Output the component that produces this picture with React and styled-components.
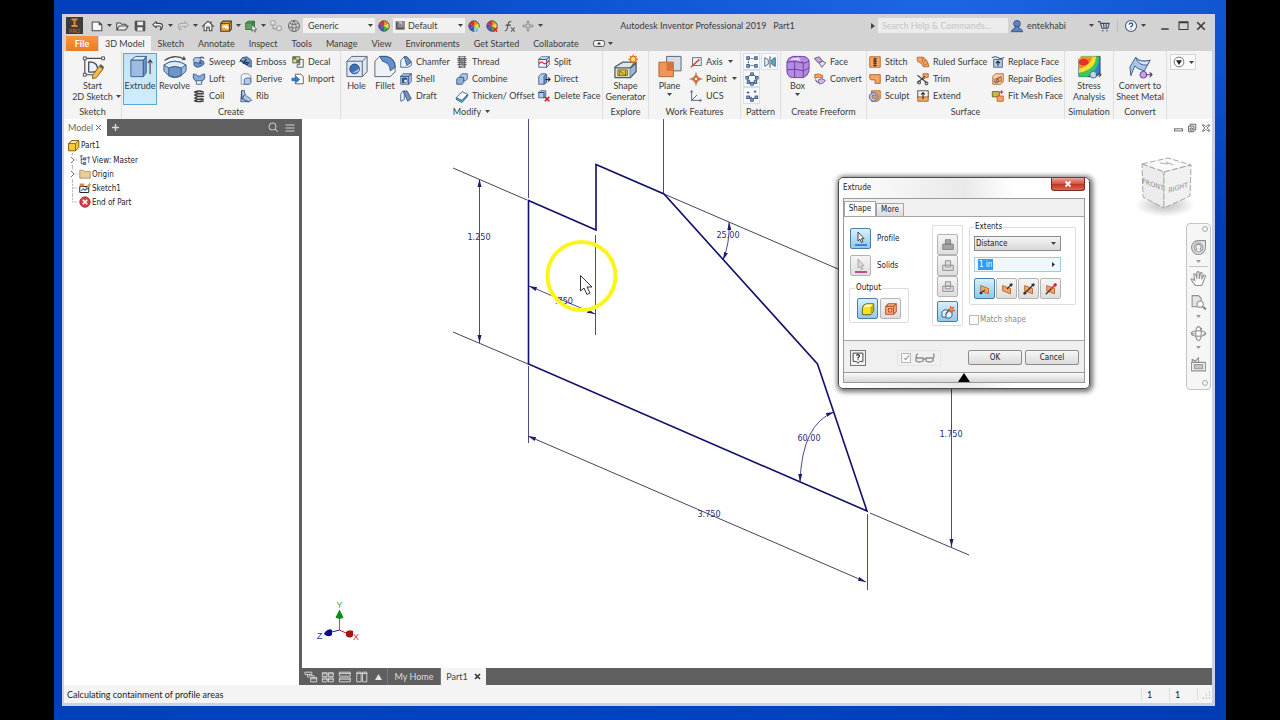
import React from 'react';
import styled, { createGlobalStyle, css } from 'styled-components';

const uiFont = '"Lato", "Open Sans", "Noto Sans", sans-serif';
const dialogFont = '"DejaVu Sans Condensed", "DejaVu Sans", sans-serif';

const GlobalStyle = createGlobalStyle`
  *, *::before, *::after { box-sizing: border-box; }
  body {
    margin: 0;
    background: #000;
    color: #3c3c3c;
    font-family: ${uiFont};
    font-size: 9px;
    line-height: 11px;
    font-variant-ligatures: none;
  }
  button, input, select { font: inherit; color: inherit; margin: 0; padding: 0; border: 0; background: none; }
  button { cursor: pointer; }
  a { color: inherit; text-decoration: none; }
  svg { display: block; flex: none; }
`;

/* ---------- icon artwork ---------- */

const blue = { fill: '#b4cbe8', stroke: '#3f5f8c', strokeWidth: 1, strokeLinejoin: 'round' };
const deep = { fill: '#6d95c8', stroke: '#34527e', strokeWidth: 1, strokeLinejoin: 'round' };
const pale = { fill: '#eef4fb', stroke: '#3f5f8c', strokeWidth: 1, strokeLinejoin: 'round' };
const orange = { fill: '#f3a566', stroke: '#b5632c', strokeWidth: 1, strokeLinejoin: 'round' };
const line = { fill: 'none', stroke: '#4a4a4a', strokeWidth: 1.2, strokeLinecap: 'round', strokeLinejoin: 'round' };
const thin = { fill: 'none', stroke: '#8f8f8f', strokeWidth: 1, strokeLinecap: 'round', strokeLinejoin: 'round' };

const Wheel = () => (
  <>
    <path d="M8 8L8 2A6 6 0 0 1 13.2 5Z" fill="#f08a1c" />
    <path d="M8 8L13.2 5A6 6 0 0 1 13.2 11Z" fill="#f2dc2c" />
    <path d="M8 8L13.2 11A6 6 0 0 1 8 14Z" fill="#3fae49" />
    <path d="M8 8L8 14A6 6 0 0 1 2.8 11Z" fill="#2f66c4" />
    <path d="M8 8L2.8 11A6 6 0 0 1 2.8 5Z" fill="#7a3fa8" />
    <path d="M8 8L2.8 5A6 6 0 0 1 8 2Z" fill="#dc2f2f" />
    <circle cx="8" cy="8" r="6" fill="none" stroke="#4b4b4b" strokeWidth="1" />
  </>
);

const Plane = () => <path d="M3 4L12 7.500V13.500L3 10Z" {...orange} />;

const art = {
  page: <path d="M2.500 3.500H10.500L13.500 6.500V13.500H2.500ZM10.500 3.500V6.500H13.500" {...line} fill="#f7f7f7" />,
  open: <path d="M2 12.500V4.500H6L7.500 6H12.500V8M2 12.500L5 8H15L12 12.500Z" {...line} fill="#ececec" />,
  save: (
    <>
      <path d="M2.500 2.500H13.500V13.500H3.500L2.500 12.500Z" fill="#555" stroke="#444" />
      <path d="M5 3H11.500V7H5ZM5 9.500H11V13.500H5Z" fill="#eee" />
    </>
  ),
  undo: <path d="M6 3L2 6.500L6 10V8H9.500C11.500 8 12 10 10.500 12.500C14 10.500 14.500 5 9.500 5H6Z" {...line} fill="#f6f6f6" />,
  redo: <path d="M10 3L14 6.500L10 10V8H6.500C4.500 8 4 10 5.500 12.500C2 10.500 1.500 5 6.500 5H10Z" {...line} stroke="#a9a9a9" fill="#ddd" />,
  home: <path d="M1.500 8.500L8 2.500L14.500 8.500M3.500 7.500V13.500H6.500V9.500H9.500V13.500H12.500V7.500M11.500 5V3" {...line} fill="#f6f6f6" />,
  update: (
    <>
      <path d="M2 5L4.500 2.500H14V11.500L12 14H2Z" fill="#f2a73a" stroke="#3c3c3c" strokeWidth="1.300" />
      <path d="M2 5H12V14M12 5L14 2.500" fill="none" stroke="#3c3c3c" />
      <path d="M3.500 9.500Q5 6.500 8 8L9 6.500L11 10.500H7L7.500 9.500Q5.500 8.500 3.500 9.500Z" fill="#fff" stroke="#fff" strokeWidth=".6" />
    </>
  ),
  pick: (
    <>
      <path d="M2 4.500L5 2.500H12L10 4.500V12H2ZM2 4.500H10L12 2.500V9" fill="#5aa95c" stroke="#2e6b33" />
      <path d="M9 6.500V14L11 12.300L12.300 15L13.500 14.300L12.300 11.800H14.500Z" fill="#fff" stroke="#444" strokeWidth=".8" />
    </>
  ),
  link: (
    <g {...line} stroke="#a0a0a0" fill="#e4e4e4">
      <rect x="2" y="2" width="5" height="5" rx="1" />
      <circle cx="11.500" cy="10.500" r="2.800" />
      <path d="M4.500 7V11H8.500" fill="none" />
    </g>
  ),
  sphere: (
    <g fill="none" stroke="#6b6b6b">
      <circle cx="8" cy="8" r="6.300" fill="#cfcfcf" stroke="#5a5a5a" />
      <path d="M3 5Q8 8 13 5M2 9Q8 12 14 9M8 2Q4 8 7 14M8 2Q12 8 10 14" />
    </g>
  ),
  wheel: <Wheel />,
  wheelPlus: (
    <>
      <Wheel />
      <path d="M8.500 10H14L12.500 12.500H14.500L11 15.500L8 12.500H10Z" fill="#72b6dc" stroke="#fff" strokeWidth=".6" />
    </>
  ),
  wheelDel: (
    <>
      <Wheel />
      <path d="M9.500 10L14 14.500M14 10L9.500 14.500" stroke="#e02b2b" strokeWidth="2" />
    </>
  ),
  fx: <path d="M2.500 13.500C5 13.500 5 10 5.800 6.500C6.300 3.500 7 2.500 9 2.800M3.500 7H8.500M9.500 10L13 14M13 10L9.500 14" {...line} />,
  plus: <path d="M7 2.500H9V7H13.500V9H9V13.500H7V9H2.500V7H7Z" fill="#ddd" stroke="#777" strokeWidth=".9" />,
  swatch: (
    <>
      <rect x="1" y="2" width="13" height="12" fill="#5c5c5c" />
      <path d="M4 2H14V11H4Z" fill="#8e8e8e" />
      <path d="M4 2H10V7Z" fill="#c4c4c4" />
    </>
  ),
  user: (
    <>
      <circle cx="8" cy="5.500" r="3.800" fill="#5f83c4" stroke="#2e4a86" />
      <path d="M1.500 14.500Q2 11.500 6 10.500V8.500H10V10.500Q14 11.500 14.500 14.500Z" fill="#5f83c4" stroke="#2e4a86" />
    </>
  ),
  cart: <path d="M1.500 3H3.500L5.500 10.500H12.500L14 5H4.500M7.500 5.500L8 10M10.500 5.500V10M6 13.500H7M11 13.500H12" {...line} stroke="#3f4a72" />,
  help: (
    <>
      <circle cx="8" cy="8" r="6.300" fill="#fff" stroke="#4a5a80" strokeWidth="1.300" />
      <path d="M6 6.500Q6 4.500 8 4.500T10 6.500Q10 7.500 8 8.800V9.800M8 11.200V12" fill="none" stroke="#2b55b5" strokeWidth="1.600" />
    </>
  ),
  sweep: (
    <>
      <ellipse cx="6" cy="6" rx="4.500" ry="3.300" {...blue} />
      <path d="M2 9Q2 14 7 14L12 12Q15 10 13 7L9 6.500Q8 9.500 11 9.500Q6 11 5 8.500Z" {...deep} />
      <path d="M9 3Q12 1.500 13.500 4" {...line} stroke="#34527e" />
    </>
  ),
  loft: (
    <>
      <path d="M1.500 2.500H4Q8 7 12 2.500H14.500V7Q14 9 10.500 11H5.500Q2 9 1.500 7Z" {...deep} fill="#84a9da" />
      <path d="M5 10H11V14H5Z" {...pale} />
    </>
  ),
  coil: <path d="M3 3.500Q8 1 13 3.500M3 3.500Q8 6 13 5.500Q8 4 3 7Q8 9.500 13 8.500Q8 7 3 10.500Q8 13 13 11.500Q8 10.500 3 13.500Q8 15.500 13 13.500" {...line} stroke="#3c3c3c" strokeWidth="1.500" />,
  emboss: (
    <>
      <path d="M4 3L9 2L14 6V14L9 12Z" {...deep} />
      <path d="M1.500 7Q3 2 8 5L6 8L11 9L9 11L5 9.500Q3 6 1.500 7Z" fill="#5a86b8" stroke="#1f355c" strokeWidth="1.300" />
      <path d="M3 5.500Q5 3.500 7 5" stroke="#fff" fill="none" />
    </>
  ),
  derive: (
    <>
      <path d="M2.500 4L5 2H10L13.500 4.500V12L11 14H2.500Z" {...pale} stroke="#7f8fa8" />
      <path d="M6 8.500L8 7H13.500V12L12 14H6Z" {...blue} />
    </>
  ),
  rib: (
    <>
      <path d="M3 2L6 1.500Q6 8 12 10L14.500 13L11 14.500H2Z" {...blue} />
      <path d="M3 2V11L11 14.500M4 11Q5 8 6 7" {...line} stroke="#34527e" />
    </>
  ),
  decal: (
    <>
      <path d="M2 2H10V9H2Z" fill="#e5e36a" stroke="#4e4e4e" />
      <path d="M2 2H6V5H2ZM6 5H10V9H6Z" fill="#6f6f6f" />
      <path d="M10 5H14V14H7V11H10Z" {...pale} stroke="#555" />
    </>
  ),
  import: (
    <>
      <path d="M5 2.500H11L14 5V13.500H5Z" fill="#fff" stroke="#555" />
      <path d="M1 7H6V5L10 8.500L6 12V10H1Z" fill="#2f7fd0" stroke="#1c5c9e" strokeWidth=".7" />
    </>
  ),
  chamfer: (
    <>
      <path d="M2 6L6 2H9L14 8V12L10 14H2Z" {...pale} />
      <path d="M6 2H9L14 8L9 12Z" {...deep} />
    </>
  ),
  shell: (
    <>
      <path d="M2 5L5 2H14V11L11 14H2Z" {...blue} />
      <path d="M2 5H11V14M11 5L14 2" {...line} stroke="#3f5f8c" />
      <path d="M4 7H9V12H4Z" fill="#3d5f95" stroke="#203a63" />
      <path d="M6 9H9V12H6Z" fill="#dfeaf8" />
    </>
  ),
  draft: (
    <>
      <path d="M2 6Q3 2 6 2V12L2 14Z" {...pale} />
      <path d="M5 3L9 2L14 11L10 14Z" {...deep} />
    </>
  ),
  thread: <path d="M4 2H12M3 4H13L3 6H13L3 8.500H13L3 11H13L4 14H12M5 2V14M11 2V14" {...line} stroke="#5a5a5a" strokeWidth="1" />,
  combine: (
    <>
      <path d="M6 4L8 2H14V8L12 10H6Z" {...blue} />
      <path d="M2 8L4 6H10V12L8 14H2Z" {...deep} fill="#8fb1dc" />
    </>
  ),
  thicken: (
    <>
      <path d="M1.500 10L8 3L14.500 6L8 14Z" fill="#f4f8fd" stroke="#3f5f8c" />
      <path d="M1.500 10V12L8 15.500L14.500 8V6L8 13Z" fill="#62b4c8" stroke="#2e5f7c" />
    </>
  ),
  split: (
    <>
      <path d="M2 5L5 2H14V11L11 14H2Z" {...pale} />
      <path d="M2 5H11V14M11 5L14 2" {...line} stroke="#3f5f8c" />
      <path d="M2 10Q5 7 7 9T11 9L14 6" fill="none" stroke="#dd3333" strokeWidth="1.500" />
    </>
  ),
  direct: (
    <>
      <path d="M2 5L5 2H10V11L8 14H2Z" {...blue} />
      <path d="M8 5L10 3H11V12L8 14Z" {...deep} />
      <path d="M10 8.500H15M13 6.500L15 8.500L13 10.500" {...line} stroke="#222" />
    </>
  ),
  deleteFace: (
    <>
      <path d="M2 4L4 2H10V8L8 10H2Z" {...blue} />
      <path d="M2 4H8V10" {...line} stroke="#34527e" />
      <path d="M9 9L14 14M14 9L9 14" stroke="#d22525" strokeWidth="2" />
    </>
  ),
  axis: (
    <>
      <path d="M4 3H14V12H4Z" fill="#eef0f4" stroke="#52627c" />
      <path d="M2 14L12 5" stroke="#c5482c" strokeWidth="1.600" />
    </>
  ),
  point: (
    <>
      <path d="M8 3L13 8L8 13L3 8Z" {...orange} />
      <path d="M8 0.500V15.500M0.500 8H15.500" stroke="#a8572a" />
      <circle cx="8" cy="8" r="2" fill="#fff" stroke="#a8572a" />
    </>
  ),
  ucs: <path d="M3 2V13H14M3 13L9 7M2 3.500L3 2L4 3.500M12.500 12L14 13L12.500 14" {...line} stroke="#47566f" strokeWidth="1" />,
  patRect: (
    <g fill="#86a9da" stroke="#34527e">
      <path d="M4 4H12M4 4V12M4 12H12" strokeDasharray="2 1" fill="none" />
      <rect x="2" y="2" width="3" height="3" /><rect x="11" y="2" width="3" height="3" />
      <rect x="2" y="11" width="3" height="3" /><rect x="11" y="11" width="3" height="3" />
    </g>
  ),
  mirror: (
    <>
      <path d="M2 3L6 5.500V10.500L2 13Z" {...pale} />
      <path d="M14 3L10 5.500V10.500L14 13Z" fill="#5fb0d0" stroke="#2c5c7c" />
      <path d="M8 1.500V14.500" stroke="#333" />
    </>
  ),
  patCirc: (
    <g fill="#86a9da" stroke="#34527e">
      <circle cx="8" cy="8" r="5" fill="none" />
      <rect x="6.500" y="1" width="3" height="3" /><rect x="6.500" y="12" width="3" height="3" />
      <rect x="1" y="5" width="3" height="3" /><rect x="12" y="5" width="3" height="3" />
      <rect x="2.500" y="10" width="3" height="3" /><rect x="10.500" y="10" width="3" height="3" />
    </g>
  ),
  patSketch: (
    <g fill="#86a9da" stroke="#34527e">
      <path d="M2 4H5M3.500 2.500V5.500M10 3H13M11.500 1.500V4.500M4 9.500H8M8 12L13 9" fill="none" />
      <rect x="2" y="8" width="3" height="3" /><rect x="6.500" y="11" width="3" height="3" /><rect x="11.500" y="8" width="3" height="3" />
    </g>
  ),
  face: (
    <>
      <path d="M1.500 4L7 2L11 7L6 9Z" fill="#c9a2ea" stroke="#5b5566" />
      <path d="M7 9L11 7L14.500 9L10 14Z" fill="#e9dcf6" stroke="#5b5566" />
    </>
  ),
  convert: (
    <>
      <path d="M2 3Q7 1 11 4V7Q7 5 2 7Z" {...orange} />
      <path d="M6 9Q10 6 14 9.500Q12 14 7 13.500Z" fill="#d7b7ef" stroke="#7a4fa8" />
      <path d="M3 9Q4 12 6 12" {...line} />
    </>
  ),
  stitch: (
    <>
      <path d="M2 2H14V14H2Z" {...orange} />
      <path d="M8 3V13M6 4.500H10M6 7H10M6 9.500H10M6 12H10" stroke="#3c2f28" strokeWidth="1.200" />
    </>
  ),
  patch: <path d="M2 3H14V13H8V9H4Q2 9 2 7Z" {...orange} />,
  sculpt: (
    <>
      <path d="M4 2H14V11L11 14H4Z" {...orange} />
      <circle cx="6.500" cy="9" r="5" fill="#a9c4ea" stroke="#3f5f8c" />
      <path d="M5 7H9V11L5 10Z" {...orange} />
    </>
  ),
  ruled: <path d="M1.500 2.500H8Q14 6 14.500 13.500H8.500Q7 9 1.500 7ZM8 2.500L7 8M11.500 5.500L8 10M14 9.500L8.500 12" {...orange} />,
  trim: (
    <>
      <path d="M8 2H14V6Q10 6 8 9Z" {...orange} />
      <path d="M2 4L12 12M2 12L10 5" {...line} stroke="#444" />
      <circle cx="3.500" cy="12" r="1.600" {...line} /><circle cx="12" cy="13" r="1.600" {...line} />
    </>
  ),
  extend: (
    <>
      <path d="M2 9H14V14H2Z" {...orange} />
      <path d="M2 9V2H14V9" {...line} stroke="#555" strokeDasharray="2 1" />
      <path d="M8 11V4M6 6L8 4L10 6" {...line} stroke="#222" />
    </>
  ),
  replace: (
    <>
      <path d="M3 5H13V14H3Z" {...blue} />
      <path d="M1.500 3Q5 1 8 3T14.500 3" {...line} stroke="#34527e" />
      <path d="M8 12V7M6 9L8 7L10 9" {...line} stroke="#222" />
    </>
  ),
  repair: (
    <>
      <path d="M2 5L5 2H14V11L11 14H2Z" {...orange} fill="#f7d3b2" />
      <path d="M5 11L12 4M5 11L8 6H12V11Z" {...orange} />
      <circle cx="6" cy="10" r="2.500" fill="none" stroke="#5a5a5a" />
    </>
  ),
  fit: (
    <>
      <path d="M1.500 3H9.500V9H1.500Z" fill="#c8b64a" stroke="#6b5c1e" />
      <path d="M7 8H14V14H7Z" {...orange} />
      <path d="M12 1.500V5.500M10 3.500H14" stroke="#d33" strokeWidth="1.300" />
    </>
  ),
  badge: (
    <>
      <circle cx="8" cy="8" r="6.500" fill="#fff" stroke="#666" strokeWidth="1.200" />
      <path d="M4 5.500H12L8 12Z" fill="#222" />
    </>
  ),
  search: <path d="M10 10L14 14M11.500 6.500A5 5 0 1 1 1.500 6.500A5 5 0 1 1 11.500 6.500Z" fill="none" stroke="#c9c9c9" strokeWidth="1.500" />,
  menu: <path d="M2 4H14M2 8H14M2 12H14" stroke="#d2d2d2" strokeWidth="1.500" />,
  part: (
    <>
      <path d="M2 5.500L6 2H14.500V10.500L10.500 14.500H2Z" fill="#f6c93a" stroke="#7a5a10" strokeWidth="1.200" />
      <path d="M2 5.500L6 2H14.500L10.500 5.500Z" fill="#fdf3b8" stroke="#7a5a10" />
      <path d="M10.500 5.500V14.500" stroke="#7a5a10" />
    </>
  ),
  view: (
    <>
      <path d="M1 2.500H5M3 2.500V13M3 7H6M3 13H6" stroke="#333" fill="none" />
      <path d="M6 5H9V8H6ZM6 11H9V14H6ZM10 5H15M13 3V12" fill="#7ea5d6" stroke="#34527e" />
    </>
  ),
  folder: <path d="M1 13.500V3H6L7.500 4.500H15V13.500Z" fill="#e9cd98" stroke="#9c8258" />,
  sketch: (
    <>
      <path d="M1 6H13V14H1Z" fill="#f7f7f7" stroke="#222" strokeWidth="1.300" />
      <path d="M3 12L6 9L8 11L12 8" stroke="#2d62b8" strokeWidth="1.400" fill="none" />
      <path d="M1 2H7V6H1Z" fill="#e0873c" /><path d="M9 8L14 2L15.500 3.500L11 9Z" fill="#efc34a" stroke="#6b4a18" strokeWidth=".7" />
    </>
  ),
  end: (
    <>
      <circle cx="8" cy="8" r="7" fill="#d6404a" stroke="#8f2430" />
      <path d="M5 5L11 11M11 5L5 11" stroke="#fff" strokeWidth="2.200" />
    </>
  ),
  cascade: <path d="M1.500 2.500H9V5H1.500ZM4 5V8H6M6 6.500H11.500V8M8 8.500H14.500V13.500H8ZM8 10H14.500" {...thin} stroke="#ddd" />,
  tiles: <path d="M2 3H7V7.500H2ZM9 3H14V7.500H9ZM2 9H7V13.500H2ZM9 9H14V13.500H9ZM2 4.500H7M9 4.500H14M2 10.500H7M9 10.500H14" {...thin} stroke="#ddd" />,
  rows: <path d="M2 2.500H14V7H2ZM2 9H14V13.500H2ZM2 4H14M2 10.500H14" {...thin} stroke="#ddd" />,
  cols: <path d="M2.500 2.500H7V13.500H2.500ZM9 2.500H13.500V13.500H9ZM2.500 4H7M9 4H13.500" {...thin} stroke="#ddd" />,
  minimise: <path d="M3 12H13" stroke="#3a3a3a" strokeWidth="2" />,
  maximise: <path d="M2.500 3.500H13.500V13H2.500ZM2.500 4.500H13.500" fill="none" stroke="#3a3a3a" strokeWidth="1.300" />,
  close: <path d="M3 3L13 13M13 3L3 13" stroke="#3a3a3a" strokeWidth="2.200" />,
  mdiMin: <rect x="2" y="8.500" width="12" height="3" fill="#fff" stroke="#555" strokeWidth="1.200" />,
  mdiMax: <path d="M5 4.500V2H14V11H11.500M2.500 5H11V14H2.500ZM5 8H8.500V11.500H5Z" fill="none" stroke="#555" strokeWidth="1.400" />,
  mdiClose: <path d="M2 3H5L8 6L11 3H14L10 8L14 13H11L8 10L5 13H2L6 8Z" fill="#fff" stroke="#555" strokeWidth="1.300" />,
  boxJoin: <path d="M5 2H11V7H5ZM2 7H14V13H2Z" fill="#a4a4a4" stroke="#7c7c7c" />,
  boxCut: <path d="M5 7V2H11V7M2 7H14V13H2ZM5 7V9H11V7" fill="#dcdcdc" stroke="#8a8a8a" />,
  boxMeet: <path d="M5 2H11V7H5ZM2 7H14V13H2ZM5 7V10H11V7" fill="#dcdcdc" stroke="#8a8a8a" />,
  newSolid: (
    <>
      <path d="M2 8L4 6H8V11L6 13H2Z" {...pale} /><path d="M6 9L8 7H12V12L10 14H6Z" {...pale} />
      <path d="M5 11L10 6" stroke="#c5482c" />
      <path d="M10.500 2L11.500 4L14 3L12.500 5L15 7L12 6.500L11 9L10.500 6.500L8 5.500L10.500 5Z" fill="#f0a050" stroke="#c5482c" strokeWidth=".7" />
    </>
  ),
  cursor: (
    <>
      <path d="M5 1V10L7 8.200L8.500 11.500L10 10.800L8.500 7.700H11Z" fill="#fff" stroke="#444" />
      <path d="M2 14H14" stroke="#2a6fd0" strokeWidth="1.600" />
    </>
  ),
  cursorOff: (
    <>
      <path d="M5 1V10L7 8.200L8.500 11.500L10 10.800L8.500 7.700H11Z" fill="#ddd" stroke="#aaa" />
      <path d="M2 14H14" stroke="#b02a80" strokeWidth="1.600" />
    </>
  ),
  solid: (
    <>
      <path d="M1.500 8Q1.500 3 6 2H14.500V10.500L11 14.500H1.500Z" fill="#f7e21e" stroke="#5d5410" />
      <path d="M3 6Q4 3 7 2.800H13L11 5.500H6Q4 5.500 3 6Z" fill="#fffbd0" />
      <path d="M11 6L14 3V10.500L11 14Z" fill="#c9a90c" />
    </>
  ),
  surface: <path d="M2 5L5 2H14V11L11 14H2ZM2 5H11V14M11 5L14 2M5 7.500H9V11.500H5Z" fill="#f6b988" stroke="#b5532a" strokeWidth="1.200" />,
  dir1: <><Plane /><path d="M8 9L2 13.500M2 13.500L5 13M2 13.500L3.500 11" stroke="#333" strokeWidth="1.300" fill="none" /></>,
  dir2: <><Plane /><path d="M8 8L14 2M14 2L11 3M14 2L13 5" stroke="#333" strokeWidth="1.300" fill="none" /></>,
  dirMid: <><Plane /><path d="M2 14L14 2M14 2L11 3M14 2L13 5M2 14L5 13M2 14L3 11" stroke="#333" strokeWidth="1.500" fill="none" /></>,
  dirAsym: <><Plane /><path d="M8 8L14 2M14 2L11 3M14 2L13 5" stroke="#d22" strokeWidth="1.800" fill="none" /><path d="M8 8L2 14" stroke="#333" strokeWidth="1.500" /></>,
  helpBox: (
    <>
      <path d="M1.500 1.500H14.500V12.500H10L8 15L6 12.500H1.500Z" fill="#fff" stroke="#333" strokeWidth="1.200" />
      <path d="M6 5Q6 3.500 8 3.500T10 5Q10 6.500 8 7.500V8.500M8 9.800V11" fill="none" stroke="#222" strokeWidth="1.500" />
    </>
  ),
  navWheel: <><path d="M8 1.500H14.500V8A6.500 6.500 0 1 1 8 1.500Z" {...thin} fill="#e6e9ef" /><circle cx="8" cy="8" r="4.200" {...thin} fill="#f4f4f4" /><path d="M5 11L6.500 9.500A2.500 2.500 0 1 1 9.500 9.500L11 11" {...thin} /></>,
  hand: <path d="M5 14.500Q2 11 1 8.500Q2 7.500 4.500 10L3.500 4Q4.500 3 5.500 4.500L6.500 8L6.500 2Q7.500 1 8.500 2L8.800 8L10 2.500Q11 2 11.500 3L11 8.500L13 5Q14.500 4.500 14.500 6L12.500 11Q12 13.500 11 14.500Z" {...thin} fill="#fafafa" />,
  zoomPage: <><path d="M2 1.500H8L10.500 4V12H2Z" {...thin} fill="#e6e6e6" /><circle cx="9.500" cy="9.500" r="3" {...thin} fill="#fff" /><path d="M12 12L15 14.500" stroke="#888" strokeWidth="2" /></>,
  orbit: <g {...thin}><ellipse cx="8" cy="8" rx="6.500" ry="2.600" /><ellipse cx="8" cy="8" rx="2.600" ry="6.500" /><path d="M1 7L2 9L4 8M11 3L10 5M13 9L15 8" /></g>,
  lookAt: <><path d="M1.500 6H14.500V14H1.500ZM2 6V3L5 5L8 1.500V5" {...thin} fill="#fafafa" /><rect x="4" y="8" width="8" height="4" fill="#c4c4c4" stroke="#999" /></>,
};

const bigArt = {
  sketch: (
    <>
      <path d="M5 4H24M5 4V21M5 21H13" {...line} />
      <path d="M9 8H12Q19 9 18 17Q14 19 9 18Z" fill="#e9f0f8" stroke="#3a4a62" strokeWidth="1.300" />
      <path d="M3.500 2.500H6.500V5.500H3.500ZM3.500 19.500H6.500V22.500H3.500ZM22.500 2.500H25.500V5.500H22.500Z" fill="#fff" stroke="#4a4a4a" />
      <path d="M13 22L20 12L24 15L17 24L13 25Z" fill="#f1bd4c" stroke="#8a5a1c" />
      <path d="M20 12L21.500 10L25 13L24 15Z" fill="#5a5a5a" />
    </>
  ),
  extrude: (
    <>
      <path d="M4 6L9 2H20L17 6Z" fill="#dfeaf8" stroke="#3f5f8c" />
      <path d="M4 6H17V23H4Z" fill="#9dbce2" stroke="#3f5f8c" />
      <path d="M17 6L20 2V19L17 23Z" fill="#6d95c8" stroke="#3f5f8c" />
      <path d="M24 20V6M22 8.500L24 5.500L26 8.500" {...line} />
    </>
  ),
  revolve: (
    <>
      <path d="M3 6Q13 -1 24 5M24 5L21 5.500M24 5L22.500 2.500" {...line} />
      <path d="M2 11Q13 3 25 11V17L20 22Q13 26 7 22L2 17Z" fill="#9dbce2" stroke="#3f5f8c" />
      <path d="M2 11Q13 3 25 11L20 14Q13 11 7 14Z" fill="#dfeaf8" stroke="#3f5f8c" />
      <path d="M7 14Q13 11 20 14V22Q14 25 7 22Z" fill="#6d95c8" stroke="#3f5f8c" />
    </>
  ),
  hole: (
    <>
      <path d="M3 7L8 2H24V18L19 23H3Z" fill="#dfe7f0" stroke="#55657c" />
      <path d="M3 7H19V23M19 7L24 2" fill="none" stroke="#55657c" />
      <circle cx="11" cy="15" r="5" fill="#3f6fb4" stroke="#284a80" />
      <path d="M8 18A5 5 0 0 0 16 14Q11 19 8 18Z" fill="#b4d0f0" />
    </>
  ),
  fillet: (
    <>
      <path d="M3 7L8 2H15Q24 4 24 13V18L19 23H3Z" fill="#eef2f7" stroke="#55657c" />
      <path d="M8 2H15Q24 4 24 13L19 17Q19 9 11 7Z" fill="#5f92d2" stroke="#34527e" />
    </>
  ),
  shape: (
    <>
      <path d="M2 13L10 8H23L18 14V24H2Z" fill="#dfe9d8" stroke="#4d5c66" strokeWidth="1.300" />
      <path d="M2 14H18M18 14L24 9V18L18 24" fill="#9cb7cf" stroke="#4d5c66" strokeWidth="1.300" />
      <path d="M5 16H15V22H5Z" fill="#e6bf3e" stroke="#7c6a24" />
      <path d="M7 22V17L13 22V17" fill="none" stroke="#7c6a24" />
      <circle cx="21" cy="5" r="3" fill="#ffe27a" stroke="#e2711d" strokeWidth="1.300" />
      <path d="M21 0V2M21 8V10M16 5H18M24 5H26M17.500 1.500L19 3M23 7L24.500 8.500M24.500 1.500L23 3" stroke="#e2711d" strokeWidth="1.300" />
    </>
  ),
  plane: (
    <>
      <path d="M10 2H25V17H10Z" fill="#d8dde3" stroke="#5a6472" />
      <path d="M2 8H17V23H2Z" fill="#f0965a" stroke="#b5632c" />
      <path d="M10 8H17V17H10Z" fill="#d9743c" />
    </>
  ),
  box: (
    <>
      <path d="M2 8Q3 3 8 2H18Q24 2 25 7V17Q24 22 19 24H8Q3 24 2 18Z" fill="#b58ae2" stroke="#6c3fa0" />
      <path d="M2 8Q10 6 19 9Q24 8 25 7M19 9V24M10 8V24M2 16Q10 14 19 17L25 14M9 2Q14 3 19 9" fill="none" stroke="#6c3fa0" />
      <path d="M5 6Q8 3 14 3L17 7Q11 5 5 6Z" fill="#e6d4f7" />
    </>
  ),
  stress: (
    <>
      <path d="M3 5L6 2H25V19L21 23H3Z" fill="#2b7fd8" stroke="#3a4a6a" />
      <path d="M3 5L6 2H24Q24 16 12 23H3Z" fill="#3fc45a" />
      <path d="M3 5L6 2H21Q20 14 8 18L3 19Z" fill="#f4e22e" />
      <path d="M3 6L6 3H17Q15 12 3 15Z" fill="#f5872a" />
      <ellipse cx="8" cy="8" rx="5" ry="3.500" fill="#e2332a" />
      <circle cx="18" cy="21" r="3.500" fill="#b9dcec" stroke="#3f6f8c" />
      <path d="M21 21H26M24 19L26 21L24 23" {...line} />
    </>
  ),
  metal: (
    <>
      <path d="M3 13L9 3Q13 9 24 6L18 17Q10 15 8 12L4 22Z" fill="#a9c6e6" stroke="#3f5f8c" />
      <path d="M9 3Q13 9 24 6L21 11Q12 12 9 3Z" fill="#dfeaf8" stroke="#3f5f8c" />
      <circle cx="17" cy="21" r="3.500" fill="#c9a2ea" stroke="#5c3f8c" />
      <path d="M20 21H26M24 19L26 21L24 23" {...line} stroke="#4c2f7c" />
    </>
  ),
};

const Icon = ({ name, size = 14 }) => (
  <svg width={size} height={size} viewBox="0 0 16 16" aria-hidden="true">{art[name]}</svg>
);
const BigIcon = ({ name }) => (
  <svg width="26" height="26" viewBox="0 0 27 26" aria-hidden="true">{bigArt[name]}</svg>
);

const CaretShape = styled.svg`
  width: 5px;
  height: 3px;
  fill: ${p => (p.$soft ? '#999' : '#444')};
`;
const Caret = ({ soft }) => (
  <CaretShape $soft={soft} viewBox="0 0 5 3" aria-hidden="true"><path d="M0 0H5L2.500 3Z" /></CaretShape>
);

/* ---------- desktop and window frame ---------- */

const Desktop = styled.div`
  min-height: 100vh;
  margin: 0 54px;
  padding: 14px 11px 14px 8px;
  display: flex;
  background:
    radial-gradient(ellipse 60% 35% at 75% 0, #1d66e4 0, rgba(29, 102, 228, 0) 100%),
    linear-gradient(90deg, #0040ba, #0043c2 50%, #003cb4);
`;
const AppWindow = styled.div`
  flex: 1;
  min-width: 0;
  display: flex;
  flex-direction: column;
  border: solid #cbd3e2;
  border-width: 1px 3px 3px 2px;
  background: #f4f4f4;
`;

/* ---------- title bar ---------- */

const TitleBar = styled.header`
  height: 21px;
  display: flex;
  align-items: center;
  padding: 0 2px;
  background: #d3d3d3;
`;
const Logo = styled.div`
  width: 17px;
  height: 17px;
  margin-right: 5px;
  background: #3f3b38;
  text { font-family: "Liberation Sans", sans-serif; font-size: 5px; fill: #c9742a; text-anchor: middle; }
`;
const ToolButton = styled.button`
  width: ${p => (p.$narrow ? 7 : 18)}px;
  height: 18px;
  display: flex;
  align-items: center;
  justify-content: center;
`;
const Combo = styled.div`
  position: relative;
  width: 72px;
  height: 15px;
  display: flex;
  align-items: center;
  gap: 2px;
  padding-left: ${p => (p.$icon ? 2 : 5)}px;
  background: #f1f1f1;

  select { flex: 1; height: 15px; appearance: none; outline: 0; line-height: 15px; }
  > svg:last-child { position: absolute; right: 2px; top: 6px; pointer-events: none; }
`;
const AppTitle = styled.h1`
  flex: 1;
  margin: 0;
  font-size: 9px;
  font-weight: 400;
  text-align: center;
  white-space: pre;
`;
const SearchBox = styled.input`
  width: 130px;
  height: 15px;
  margin-left: 3px;
  padding: 0 4px;
  background: #ececec;
  &::placeholder { color: #c4c4c4; opacity: 1; }
`;
const Account = styled.a`
  display: flex;
  align-items: center;
  width: 80px;
  gap: 3px;
  padding-left: 2px;
`;
const Rule = styled.span`
  width: 1px;
  height: 12px;
  margin: 0 4px;
  background: #bdbdbd;
`;
const WindowButtons = styled.div`
  display: flex;
  margin-left: 9px;
`;

/* ---------- ribbon ---------- */

const TabBar = styled.nav`
  height: 15px;
  display: flex;
  align-items: stretch;
  padding-left: 2px;
  background: #d3d3d3;
`;
const RibbonTab = styled.button`
  padding: 0 7px;
  line-height: 14px;
  ${p => p.$kind === 'file' && css`
    width: 32px;
    margin-right: 1px;
    background: linear-gradient(#f9953f, #ef7a1e);
    color: #fff;
    font-weight: 700;
  `}
  ${p => p.$kind === 'active' && css`
    padding: 0 6px;
    background: #f4f4f4;
  `}
`;
const RibbonToggle = styled.button`
  display: flex;
  align-items: center;
  gap: 3px;
  margin-left: 7px;
`;
const Ribbon = styled.div`
  height: 68px;
  display: flex;
  background: #f4f4f4;
`;
const Group = styled.section`
  flex: none;
  width: ${p => p.$width}px;
  display: flex;
  flex-direction: column;
  border-right: 1px solid #dedede;
`;
const GroupBody = styled.div`
  height: 53px;
  display: flex;
  justify-content: ${p => (p.$center ? 'center' : 'flex-start')};
  padding: 2px 1px 0;
`;
const GroupLabel = styled.h2`
  height: 15px;
  margin: 0;
  display: flex;
  align-items: center;
  justify-content: center;
  gap: 4px;
  font-size: 9px;
  font-weight: 400;
`;
const BigButton = styled.button`
  flex: none;
  width: ${p => p.$width}px;
  height: 52px;
  display: flex;
  flex-direction: column;
  align-items: center;
  white-space: pre;
  text-align: center;
  line-height: 11px;
  border: 1px solid ${p => (p.$active ? '#5da6cf' : 'transparent')};
  background: ${p => (p.$active ? 'linear-gradient(#c5e3f6, #cdeefc)' : 'none')};
  > ${CaretShape} { margin-top: 2px; }
`;
const SplitLabel = styled.span`
  display: flex;
  align-items: center;
  gap: 3px;
  margin-right: -8px;
`;
const Column = styled.div`
  flex: none;
  width: ${p => p.$width}px;
  display: flex;
  flex-direction: column;
`;
const SmallButton = styled.button`
  height: 17px;
  display: flex;
  align-items: center;
  gap: 3px;
  white-space: nowrap;
  > ${CaretShape} { margin-left: 2px; }
`;
const PatternGrid = styled.div`
  display: grid;
  grid-template-columns: 17px 17px;
  grid-auto-rows: 17px;
  gap: 0 1px;
`;
const PatternButton = styled.button`
  display: flex;
  align-items: center;
  justify-content: center;
  border: 1px solid #d9dfe8;
  background: #f9fafc;
`;
const OptionButton = styled.button`
  width: 26px;
  height: 16px;
  margin: 3px;
  display: flex;
  align-items: center;
  justify-content: center;
  gap: 4px;
  border: 1px solid #d4d4d4;
  background: #fbfbfb;
`;

/* ---------- work area ---------- */

const Workspace = styled.div`
  flex: 1;
  display: flex;
  background: #fff;
`;
const Browser = styled.aside`
  width: 238px;
  border-right: 3px solid #5f5f5f;
`;
const BrowserHead = styled.div`
  height: 17px;
  display: flex;
  align-items: center;
  gap: 5px;
  padding-right: 3px;
  background: #5f5f5f;
`;
const BrowserTab = styled.div`
  width: 43px;
  height: 17px;
  padding: 0 5px 0 4px;
  display: flex;
  align-items: center;
  justify-content: space-between;
  background: #fff;
  color: #666;
`;
const Spacer = styled.span`
  flex: 1;
`;
const Tree = styled.ul`
  margin: 0;
  padding: 2px 0 0 3px;
  list-style: none;
  font-family: ${dialogFont};
  font-size: 8px;
  color: #222;
`;
const TreeRow = styled.li`
  height: ${p => (p.$root ? 15 : 14)}px;
  display: flex;
  align-items: center;
  gap: 1px;
`;
const Twig = styled.span`
  width: 11px;
  height: 14px;
`;
const Stage = styled.main`
  flex: 1;
  min-width: 0;
  display: flex;
  flex-direction: column;
`;
const Canvas = styled.div`
  flex: 1;
  position: relative;
  overflow: hidden;
  background: #fff;
`;
const Drawing = styled.svg`
  position: absolute;
  left: 0;
  top: 0;
  text { font-family: ${dialogFont}; font-size: 9px; fill: #2c2c7c; text-anchor: middle; }
`;
const Triad = styled.svg`
  position: absolute;
  left: 10px;
  bottom: 20px;
  text { font-family: "Liberation Sans", sans-serif; font-size: 9px; text-anchor: middle; }
`;
const ViewCube = styled.svg`
  position: absolute;
  right: 14px;
  top: 32px;
  text { font-family: ${dialogFont}; font-size: 7px; fill: #8c8c8c; text-anchor: middle; }
`;
const DocButtons = styled.div`
  position: absolute;
  right: 0;
  top: 3px;
  display: flex;
  gap: 2px;
`;
const DocButton = styled.button`
  width: 12px;
  height: 12px;
  display: flex;
  align-items: center;
  justify-content: center;
`;
const NavBar = styled.div`
  position: absolute;
  right: 1px;
  top: 104px;
  width: 25px;
  height: 167px;
  padding: 2px 2px 3px;
  display: flex;
  flex-direction: column;
  align-items: center;
  justify-content: space-between;
  border: 1px solid #c4c4c4;
  border-radius: 4px;
  background: #f6f6f6;
  > :first-child { margin-bottom: 4px; }
`;
const NavButton = styled.button`
  width: 19px;
  display: flex;
  flex-direction: column;
  align-items: center;
  gap: 4px;
  padding-bottom: 3px;
  border-bottom: 1px solid ${p => (p.$ruled ? '#c4c4c4' : 'transparent')};
`;
const NavDot = styled.span`
  width: 6px;
  height: 6px;
  align-self: flex-end;
  border: 1px solid #aaa;
  border-radius: 50%;
`;

/* ---------- extrude dialog ---------- */

const Dialog = styled.form`
  position: absolute;
  left: 536px;
  top: 58px;
  width: 252px;
  padding: 0 4px 5px;
  border: 1px solid #4c4c4c;
  border-radius: 5px;
  background: linear-gradient(90deg, #fff, #e9e9e9 50%, #fff 70%);
  box-shadow: 1px 1px 5px 2px rgba(0, 0, 0, 0.55);
  font-family: ${dialogFont};
  font-size: 8px;
  line-height: 10px;
  color: #222;
`;
const DialogHead = styled.div`
  height: 20px;
  display: flex;
  justify-content: space-between;
  align-items: flex-start;
  h2 { margin: 0; font-size: 8px; font-weight: 400; line-height: 19px; }
`;
const CloseButton = styled.button`
  width: 34px;
  height: 13px;
  display: flex;
  align-items: center;
  justify-content: center;
  border: 1px solid #7c2c24;
  border-top: 0;
  border-radius: 0 0 3px 3px;
  background: linear-gradient(#e7a59b, #cf5341 50%, #bf3421 51%, #d96a55);
`;
const DialogBody = styled.div`
  border: 1px solid #9a9a9a;
  background: #f0f0f0;
`;
const DialogTabs = styled.div`
  height: 17px;
  display: flex;
  align-items: flex-end;
`;
const DialogTab = styled.button`
  height: ${p => (p.$active ? 15 : 13)}px;
  width: ${p => (p.$active ? 32 : 28)}px;
  border: 1px solid #a5a5a5;
  border-bottom: 0;
  background: ${p => (p.$active ? '#fff' : 'linear-gradient(#f4f4f4, #dcdcdc)')};
`;
const DialogPage = styled.div`
  height: 125px;
  display: grid;
  grid-template-columns: 60px 31px 107px;
  gap: 6px;
  justify-content: end;
  padding: 8px 8px 0 5px;
  border-top: 1px solid #a5a5a5;
  border-bottom: 1px solid #a5a5a5;
  background: #fff;
  > :first-child { margin-left: -17px; }
`;
const PickRow = styled.div`
  height: 27px;
  display: flex;
  align-items: center;
  gap: 6px;
  padding-left: 1px;
`;
const SquareButton = styled.button`
  flex: none;
  width: 21px;
  height: 21px;
  display: flex;
  align-items: center;
  justify-content: center;
  border: 1px solid ${p => (p.$on ? '#4b7fa6' : '#b4b4b4')};
  border-radius: 2px;
  background: ${p => (p.$on ? 'linear-gradient(#d8effb, #8fc9ec)' : 'linear-gradient(#f5f5f5, #dedede)')};
`;
const OutputSet = styled.fieldset`
  width: 60px;
  min-width: 0;
  height: 40px;
  margin: 4px 0 0;
  padding: 5px 0 0 7px;
  border: 1px solid #dcdcdc;
  border-radius: 2px;
  legend { padding: 0 1px; line-height: 10px; margin-left: -2px; }
`;
const ButtonRow = styled.div`
  display: flex;
  gap: ${p => p.$gap}px;
`;
const OperationSet = styled.div`
  height: 101px;
  padding: 8px 0 3px;
  display: flex;
  flex-direction: column;
  align-items: center;
  border: 1px solid #dcdcdc;
  border-radius: 2px;
  > :last-child { margin-top: auto; }
`;
const ExtentSet = styled.fieldset`
  min-width: 0;
  height: 83px;
  margin: -3px 0 0;
  padding: 4px 14px 0 4px;
  display: flex;
  flex-direction: column;
  gap: 6px;
  border: 1px solid #dcdcdc;
  border-radius: 2px;
  legend { padding: 0 1px; line-height: 10px; }
`;
const Field = styled.div`
  position: relative;
  height: 15px;
  display: flex;
  border: 1px solid ${p => (p.$text ? '#a8c8dc' : '#8c8c8c')};
  background: ${p => (p.$text ? '#f1f8fd' : 'linear-gradient(#f4f4f4, #d8d8d8)')};
  select, input { width: 100%; padding: 0 1px; appearance: none; outline: 0; line-height: 12px; }
  > svg { position: absolute; right: ${p => (p.$text ? 5 : 4)}px; top: ${p => (p.$text ? 4 : 5)}px; pointer-events: none; }
`;
const DistanceInput = styled.input`
  && { width: 15px; margin: 1px 0 1px 3px; background: #3399ff; color: #fff; line-height: 10px; }
`;
const CheckLabel = styled.label`
  display: flex;
  align-items: center;
  gap: 1px;
  margin-top: 10px;
  color: #8a8a8a;
`;
const Tick = styled.input`
  appearance: none;
  width: 10px;
  height: 10px;
  display: flex;
  justify-content: center;
  border: 1px solid #b9b9b9;
  background: #fafafa;
  &:checked::after {
    content: '';
    width: 3px;
    height: 6px;
    border: solid #999;
    border-width: 0 1px 1px 0;
    transform: rotate(40deg);
  }
`;
const DialogFoot = styled.div`
  height: 31px;
  display: flex;
  align-items: center;
  gap: 3px;
  padding: 2px 5px 0 6px;
`;
const HelpButton = styled.button`
  width: 16px;
  height: 16px;
  display: flex;
  align-items: center;
  justify-content: center;
  border: 1px solid #777;
`;
const Preview = styled.label`
  width: 44px;
  height: 16px;
  margin: 0 auto 0 28px;
  display: flex;
  align-items: center;
  gap: 4px;
  padding-left: 3px;
  border: 1px solid #e6e6e6;
`;
const PushButton = styled.button`
  width: 54px;
  height: 15px;
  border: 1px solid #8c8c8c;
  border-radius: 2px;
  background: linear-gradient(#f6f6f6, #dcdcdc);
`;
const Expander = styled.button`
  width: 100%;
  height: 10px;
  display: flex;
  justify-content: center;
  border-top: 1px solid #999;
  background: linear-gradient(#fafafa, #d6d6d6);
`;

/* ---------- document tabs and status bar ---------- */

const DocTabs = styled.div`
  height: 17px;
  display: flex;
  align-items: stretch;
  background: #5f5f5f;
  color: #ddd;
`;
const LayoutButton = styled.button`
  width: 17px;
  display: flex;
  align-items: center;
  justify-content: center;
`;
const DocTab = styled.button`
  display: flex;
  align-items: center;
  justify-content: center;
  gap: 6px;
  width: ${p => (p.$active ? 46 : 53)}px;
  border-left: 1px solid #777;
  background: ${p => (p.$active ? '#f4f4f4' : 'none')};
  color: ${p => (p.$active ? '#444' : '#ddd')};
`;
const StatusBar = styled.footer`
  height: 18px;
  display: flex;
  align-items: center;
  padding-left: 3px;
  color: #222;
  p { margin: 0; flex: 1; }
`;
const Counter = styled.span`
  width: 28px;
  padding-left: 5px;
  line-height: 13px;
  border-left: 1px solid #dcdcdc;
`;
const Grip = styled.span`
  width: 15px;
  border-left: 1px solid #dcdcdc;
`;

/* ---------- composed parts ---------- */

const Small = ({ icon, children, menu }) => (
  <SmallButton><Icon name={icon} />{children}{menu && <Caret />}</SmallButton>
);

const RibbonGroup = ({ width, label, menu, center, children }) => (
  <Group $width={width}>
    <GroupBody $center={center}>{children}</GroupBody>
    <GroupLabel>{label}{menu && <Caret />}</GroupLabel>
  </Group>
);

const StackColumn = ({ width, items }) => (
  <Column $width={width}>
    {items.map(([icon, text, menu]) => <Small key={text} icon={icon} menu={menu}>{text}</Small>)}
  </Column>
);

const Tool = ({ icon, label }) => (
  <ToolButton aria-label={label}><Icon name={icon} /></ToolButton>
);
const ToolMenu = ({ label }) => (
  <ToolButton $narrow aria-label={label}><Caret /></ToolButton>
);

const SketchDrawing = () => (
  <Drawing width="910" height="549" viewBox="302 119 910 549" role="img" aria-label="Part profile sketch with dimensions">
    <defs>
      <marker id="tip" viewBox="0 0 8 6" refX="8" refY="3" markerWidth="8" markerHeight="6" markerUnits="userSpaceOnUse" orient="auto-start-reverse">
        <path d="M0 1L8 3L0 5Z" fill="#1c1c70" />
      </marker>
    </defs>
    <g stroke="#4a4a8e" strokeWidth="1" fill="none">
      <path d="M528.500 119V198M528.500 366V443M663.500 119V193M595.500 235V335M867.500 514V590" />
      <path d="M453 168L527 200M453 332L528 364M664 194L838 269M870 513L969 555" stroke="#44445c" />
      <path d="M479.500 179V343" markerStart="url(#tip)" markerEnd="url(#tip)" />
      <path d="M529 286L595 314" markerStart="url(#tip)" markerEnd="url(#tip)" />
      <path d="M729 222Q730 243 723 260" markerStart="url(#tip)" markerEnd="url(#tip)" />
      <path d="M834 412Q802 424 800 482" markerStart="url(#tip)" markerEnd="url(#tip)" />
      <path d="M951.500 380V547" markerEnd="url(#tip)" />
      <path d="M528 436L866 582" markerStart="url(#tip)" markerEnd="url(#tip)" stroke="#44445c" />
    </g>
    <path d="M596 230L528.500 200.500V364L867 511L817.500 364L664 194L596 164.500Z" fill="none" stroke="#10106c" strokeWidth="1.600" />
    <text x="479" y="240">1.250</text>
    <text x="564" y="304">.750</text>
    <text x="728" y="238">25.00</text>
    <text x="809" y="441">60.00</text>
    <text x="951" y="437">1.750</text>
    <text x="709" y="517">3.750</text>
    <circle cx="581.500" cy="276" r="34" fill="none" stroke="#faf51c" strokeWidth="4" />
    <path d="M580.500 275.500V291L584 288L587 294.500L590 293L587 287H592Z" fill="#fff" stroke="#333" />
  </Drawing>
);

const AxisTriad = () => (
  <Triad width="60" height="50" viewBox="312 598 60 50" role="img" aria-label="Axis triad">
    <path d="M339.500 630V616" stroke="#2c9c2c" />
    <path d="M339.500 630L348 634" stroke="#b02020" /><path d="M339.500 630L328 633" stroke="#20208c" />
    <path d="M339.500 609.500L343.500 617.500Q339.500 620 335.500 617.500Z" fill="#0c8c14" />
    <path d="M346 632Q349 629 353 631V636Q350 639 346 636Z" fill="#a81414" />
    <path d="M332 630Q329 628 325 632L324 634Q328 638 332 635Z" fill="#0c0c88" />
    <text x="339.500" y="608" fill="#35b335">Y</text>
    <text x="356" y="640" fill="#d83838">X</text>
    <text x="319.500" y="639" fill="#2c2cb4">Z</text>
  </Triad>
);

const Cube = () => (
  <ViewCube width="62" height="68" viewBox="1136 151 62 68" role="img" aria-label="View cube">
    <defs>
      <radialGradient id="shade"><stop offset=".3" stopColor="#cfcfcf" /><stop offset="1" stopColor="#fff" /></radialGradient>
    </defs>
    <ellipse cx="1165" cy="205" rx="30" ry="12" fill="url(#shade)" />
    <g stroke="#a6a6a6" strokeDasharray="6 2">
      <path d="M1142 164L1168 158L1191 165L1164 172Z" fill="#fafafa" />
      <path d="M1142 164L1164 172V208L1143 197Z" fill="#ececec" />
      <path d="M1164 172L1191 165L1190 196L1164 208Z" fill="#f1f1f1" />
    </g>
    <g transform="translate(1153 184) skewY(20)"><text x="0" y="3">FRONT</text></g>
    <g transform="translate(1178 187) skewY(-17)"><text x="0" y="3">RIGHT</text></g>
    <path d="M1160 163L1168 164M1166 162L1173 165" stroke="#b4b4b4" strokeWidth="1.200" />
  </ViewCube>
);

const ExtrudeDialog = () => (
  <Dialog onSubmit={e => e.preventDefault()}>
    <DialogHead>
      <h2>Extrude</h2>
      <CloseButton type="button" aria-label="Close">
        <svg width="8" height="8" viewBox="0 0 8 8"><path d="M1.500 1.500L6.500 6.500M6.500 1.500L1.500 6.500" stroke="#fff" strokeWidth="1.800" /></svg>
      </CloseButton>
    </DialogHead>
    <DialogBody>
      <DialogTabs>
        <DialogTab type="button" $active>Shape</DialogTab>
        <DialogTab type="button">More</DialogTab>
      </DialogTabs>
      <DialogPage>
        <div>
          <PickRow><SquareButton type="button" id="profile" $on><Icon name="cursor" size={16} /></SquareButton><label htmlFor="profile">Profile</label></PickRow>
          <PickRow><SquareButton type="button" id="solids"><Icon name="cursorOff" size={16} /></SquareButton><label htmlFor="solids">Solids</label></PickRow>
          <OutputSet>
            <legend>Output</legend>
            <ButtonRow $gap={2}>
              <SquareButton type="button" aria-label="Solid" $on><Icon name="solid" /></SquareButton>
              <SquareButton type="button" aria-label="Surface"><Icon name="surface" /></SquareButton>
            </ButtonRow>
          </OutputSet>
        </div>
        <OperationSet>
          <SquareButton type="button" aria-label="Join"><Icon name="boxJoin" /></SquareButton>
          <SquareButton type="button" aria-label="Cut"><Icon name="boxCut" /></SquareButton>
          <SquareButton type="button" aria-label="Intersect"><Icon name="boxMeet" /></SquareButton>
          <SquareButton type="button" aria-label="New solid" $on><Icon name="newSolid" size={16} /></SquareButton>
        </OperationSet>
        <div>
          <ExtentSet>
            <legend>Extents</legend>
            <Field>
              <select aria-label="Extent type" defaultValue="Distance"><option>Distance</option></select>
              <Caret />
            </Field>
            <Field $text>
              <DistanceInput aria-label="Distance" defaultValue="1 in" />
              <svg width="3" height="5" viewBox="0 0 3 5"><path d="M0 0L3 2.500L0 5Z" fill="#333" /></svg>
            </Field>
            <ButtonRow $gap={1}>
              <SquareButton type="button" aria-label="Direction 1" $on><Icon name="dir1" /></SquareButton>
              <SquareButton type="button" aria-label="Direction 2"><Icon name="dir2" /></SquareButton>
              <SquareButton type="button" aria-label="Symmetric"><Icon name="dirMid" /></SquareButton>
              <SquareButton type="button" aria-label="Asymmetric"><Icon name="dirAsym" /></SquareButton>
            </ButtonRow>
          </ExtentSet>
          <CheckLabel><Tick type="checkbox" />Match shape</CheckLabel>
        </div>
      </DialogPage>
      <DialogFoot>
        <HelpButton type="button" aria-label="Help"><Icon name="helpBox" size={12} /></HelpButton>
        <Preview aria-label="Preview">
          <Tick type="checkbox" defaultChecked />
          <svg width="20" height="10" viewBox="0 0 20 10"><path d="M1 6Q1 1 3 1M1 5H8V8Q4 10 1 8ZM8 6H11M11 5H18V8Q14 10 11 8ZM18 6Q20 1 18 1" fill="none" stroke="#8c8c8c" strokeWidth="1.300" /></svg>
        </Preview>
        <PushButton type="submit">OK</PushButton>
        <PushButton type="button">Cancel</PushButton>
      </DialogFoot>
      <Expander type="button" aria-label="Collapse">
        <svg width="12" height="9" viewBox="0 0 12 9"><path d="M6 0L12 9H0Z" fill="#000" /></svg>
      </Expander>
    </DialogBody>
  </Dialog>
);

const treeItems = [
  ['view', 'View: Master', true],
  ['folder', 'Origin', true],
  ['sketch', 'Sketch1', false],
  ['end', 'End of Part', false],
];
const tabs = ['Sketch', 'Annotate', 'Inspect', 'Tools', 'Manage', 'View', 'Environments', 'Get Started', 'Collaborate'];

export default function App() {
  return (
    <>
      <GlobalStyle />
      <Desktop>
        <AppWindow>
          <TitleBar>
            <Logo>
              <svg width="17" height="17" viewBox="0 0 17 17" aria-label="Inventor Pro">
                <path d="M5.500 1.500H11.500V3.500H9.500V8H11.500V10H5.500V8H7.500V3.500H5.500Z" fill="#e58a2e" />
                <text x="8.500" y="15.500">PRO</text>
              </svg>
            </Logo>
            <Tool icon="page" label="New" /><ToolMenu label="New options" />
            <Tool icon="open" label="Open" /><Tool icon="save" label="Save" />
            <Tool icon="undo" label="Undo" /><ToolMenu label="Undo history" />
            <Tool icon="redo" label="Redo" /><ToolMenu label="Redo history" />
            <Tool icon="home" label="Home" />
            <Tool icon="update" label="Update" /><ToolMenu label="Update options" />
            <Tool icon="pick" label="Select" /><ToolMenu label="Select options" />
            <Tool icon="link" label="Link" /><Tool icon="sphere" label="Material" />
            <Combo>
              <select aria-label="Material" defaultValue="Generic"><option>Generic</option></select>
              <Caret />
            </Combo>
            <Tool icon="wheel" label="Appearance" />
            <Combo $icon>
              <Icon name="swatch" size={11} />
              <select aria-label="Appearance" defaultValue="Default"><option>Default</option></select>
              <Caret />
            </Combo>
            <Tool icon="wheelPlus" label="Adjust" /><Tool icon="wheelDel" label="Clear" />
            <Tool icon="fx" label="Parameters" /><Tool icon="plus" label="Add" />
            <ToolMenu label="Customise" />
            <AppTitle>{'Autodesk Inventor Professional 2019   Part1'}</AppTitle>
            <svg width="4" height="6" viewBox="0 0 4 6"><path d="M0 0L4 3L0 6Z" fill="#444" /></svg>
            <SearchBox aria-label="Search help" placeholder="Search Help & Commands..." />
            <Account href="#account"><Icon name="user" />entekhabi</Account>
            <ToolMenu label="Account menu" />
            <Tool icon="cart" label="Store" />
            <Rule />
            <Tool icon="help" label="Help" />
            <ToolMenu label="Help menu" />
            <WindowButtons>
              <ToolButton aria-label="Minimise"><Icon name="minimise" size={12} /></ToolButton>
              <ToolButton aria-label="Maximise"><Icon name="maximise" size={13} /></ToolButton>
              <ToolButton aria-label="Close"><Icon name="close" size={12} /></ToolButton>
            </WindowButtons>
          </TitleBar>

          <TabBar>
            <RibbonTab $kind="file">File</RibbonTab>
            <RibbonTab $kind="active">3D Model</RibbonTab>
            {tabs.map(t => <RibbonTab key={t}>{t}</RibbonTab>)}
            <RibbonToggle aria-label="Ribbon display">
              <svg width="12" height="7" viewBox="0 0 12 7"><rect x=".5" y=".5" width="11" height="6" rx="2" fill="#eee" stroke="#555" /><path d="M4 4.500H8L6 2Z" fill="#333" /></svg>
              <Caret />
            </RibbonToggle>
          </TabBar>

          <Ribbon>
            <RibbonGroup width={58} label="Sketch" center>
              <BigButton $width={54}>
                <BigIcon name="sketch" />
                <span>Start</span>
                <SplitLabel>2D Sketch<Caret /></SplitLabel>
              </BigButton>
            </RibbonGroup>
            <RibbonGroup width={219} label="Create">
              <BigButton $width={34} $active><BigIcon name="extrude" />Extrude</BigButton>
              <BigButton $width={35}><BigIcon name="revolve" />Revolve</BigButton>
              <StackColumn width={47} items={[['sweep', 'Sweep'], ['loft', 'Loft'], ['coil', 'Coil']]} />
              <StackColumn width={52} items={[['emboss', 'Emboss'], ['derive', 'Derive'], ['rib', 'Rib']]} />
              <StackColumn width={47} items={[['decal', 'Decal'], ['import', 'Import']]} />
            </RibbonGroup>
            <RibbonGroup width={262} label="Modify" menu>
              <BigButton $width={29}><BigIcon name="hole" />Hole</BigButton>
              <BigButton $width={28}><BigIcon name="fillet" />Fillet</BigButton>
              <StackColumn width={56} items={[['chamfer', 'Chamfer'], ['shell', 'Shell'], ['draft', 'Draft']]} />
              <StackColumn width={82} items={[['thread', 'Thread'], ['combine', 'Combine'], ['thicken', 'Thicken/ Offset']]} />
              <StackColumn width={64} items={[['split', 'Split'], ['direct', 'Direct'], ['deleteFace', 'Delete Face']]} />
            </RibbonGroup>
            <RibbonGroup width={46} label="Explore" center>
              <BigButton $width={44}><BigIcon name="shape" />{'Shape\nGenerator'}</BigButton>
            </RibbonGroup>
            <RibbonGroup width={92} label="Work Features">
              <BigButton $width={39}><BigIcon name="plane" />Plane<Caret /></BigButton>
              <StackColumn width={51} items={[['axis', 'Axis', true], ['point', 'Point', true], ['ucs', 'UCS']]} />
            </RibbonGroup>
            <RibbonGroup width={40} label="Pattern" center>
              <PatternGrid>
                <PatternButton aria-label="Rectangular"><Icon name="patRect" /></PatternButton>
                <PatternButton aria-label="Mirror"><Icon name="mirror" /></PatternButton>
                <PatternButton aria-label="Circular"><Icon name="patCirc" /></PatternButton>
                <span />
                <PatternButton aria-label="Sketch driven"><Icon name="patSketch" /></PatternButton>
              </PatternGrid>
            </RibbonGroup>
            <RibbonGroup width={86} label="Create Freeform">
              <BigButton $width={31}><BigIcon name="box" />Box<Caret /></BigButton>
              <StackColumn width={52} items={[['face', 'Face'], ['convert', 'Convert']]} />
            </RibbonGroup>
            <RibbonGroup width={198} label="Surface">
              <StackColumn width={48} items={[['stitch', 'Stitch'], ['patch', 'Patch'], ['sculpt', 'Sculpt']]} />
              <StackColumn width={75} items={[['ruled', 'Ruled Surface'], ['trim', 'Trim'], ['extend', 'Extend']]} />
              <StackColumn width={70} items={[['replace', 'Replace Face'], ['repair', 'Repair Bodies'], ['fit', 'Fit Mesh Face']]} />
            </RibbonGroup>
            <RibbonGroup width={49} label="Simulation" center>
              <BigButton $width={46}><BigIcon name="stress" />{'Stress\nAnalysis'}</BigButton>
            </RibbonGroup>
            <RibbonGroup width={53} label="Convert" center>
              <BigButton $width={50}><BigIcon name="metal" />{'Convert to\nSheet Metal'}</BigButton>
            </RibbonGroup>
            <OptionButton aria-label="Ribbon options"><Icon name="badge" size={12} /><Caret /></OptionButton>
          </Ribbon>

          <Workspace>
            <Browser>
              <BrowserHead>
                <BrowserTab>
                  Model
                  <svg width="7" height="7" viewBox="0 0 7 7"><path d="M1 1L6 6M6 1L1 6" stroke="#666" /></svg>
                </BrowserTab>
                <svg width="7" height="7" viewBox="0 0 7 7"><path d="M3.500 0V7M0 3.500H7" stroke="#ddd" strokeWidth="1.400" /></svg>
                <Spacer />
                <Icon name="search" size={11} />
                <Icon name="menu" size={12} />
              </BrowserHead>
              <Tree>
                <TreeRow $root><Icon name="part" size={13} />Part1</TreeRow>
                {treeItems.map(([icon, text, open]) => (
                  <TreeRow key={text}>
                    <Twig>
                      <svg width="11" height="14" viewBox="0 0 11 14">
                        <path d={icon === 'end' ? 'M5.500 0V7H11' : 'M5.500 0V14M5.500 7H11'} fill="none" stroke="#bbb" strokeDasharray="2 1" />
                        {open && <path d="M3 2.500H7V11.500H3Z" fill="#fff" />}
                        {open && <path d="M4 4L7 7L4 10" fill="none" stroke="#777" />}
                      </svg>
                    </Twig>
                    <Icon name={icon} size={12} />{text}
                  </TreeRow>
                ))}
              </Tree>
            </Browser>

            <Stage>
              <Canvas>
                <SketchDrawing />
                <AxisTriad />
                <Cube />
                <DocButtons>
                  <DocButton aria-label="Minimise document"><Icon name="mdiMin" size={11} /></DocButton>
                  <DocButton aria-label="Restore document"><Icon name="mdiMax" size={10} /></DocButton>
                  <DocButton aria-label="Close document"><Icon name="mdiClose" size={10} /></DocButton>
                </DocButtons>
                <NavBar>
                  <NavDot />
                  <NavButton aria-label="Steering wheel" $ruled><Icon name="navWheel" size={17} /><Caret soft /></NavButton>
                  <NavButton aria-label="Pan"><Icon name="hand" size={17} /></NavButton>
                  <NavButton aria-label="Zoom"><Icon name="zoomPage" size={17} /><Caret soft /></NavButton>
                  <NavButton aria-label="Orbit"><Icon name="orbit" size={17} /><Caret soft /></NavButton>
                  <NavButton aria-label="Look at"><Icon name="lookAt" size={17} /></NavButton>
                  <NavDot />
                </NavBar>
                <ExtrudeDialog />
              </Canvas>
              <DocTabs>
                <LayoutButton aria-label="Cascade"><Icon name="cascade" /></LayoutButton>
                <LayoutButton aria-label="Tile"><Icon name="tiles" /></LayoutButton>
                <LayoutButton aria-label="Tile in rows"><Icon name="rows" /></LayoutButton>
                <LayoutButton aria-label="Tile in columns"><Icon name="cols" /></LayoutButton>
                <LayoutButton aria-label="More documents"><svg width="7" height="6" viewBox="0 0 7 6"><path d="M3.500 0L7 6H0Z" fill="#e4e4e4" /></svg></LayoutButton>
                <DocTab>My Home</DocTab>
                <DocTab $active>
                  Part1
                  <svg width="7" height="7" viewBox="0 0 7 7"><path d="M1 1L6 6M6 1L1 6" stroke="#333" strokeWidth="1.600" /></svg>
                </DocTab>
              </DocTabs>
            </Stage>
          </Workspace>

          <StatusBar>
            <p>Calculating containment of profile areas</p>
            <Counter>1</Counter>
            <Counter>1</Counter>
            <Grip>
              <svg width="14" height="12" viewBox="0 0 14 12"><path d="M11 4H12M8 7H9M11 7H12M5 10H6M8 10H9M11 10H12" stroke="#999" strokeWidth="1.200" /></svg>
            </Grip>
          </StatusBar>
        </AppWindow>
      </Desktop>
    </>
  );
}
